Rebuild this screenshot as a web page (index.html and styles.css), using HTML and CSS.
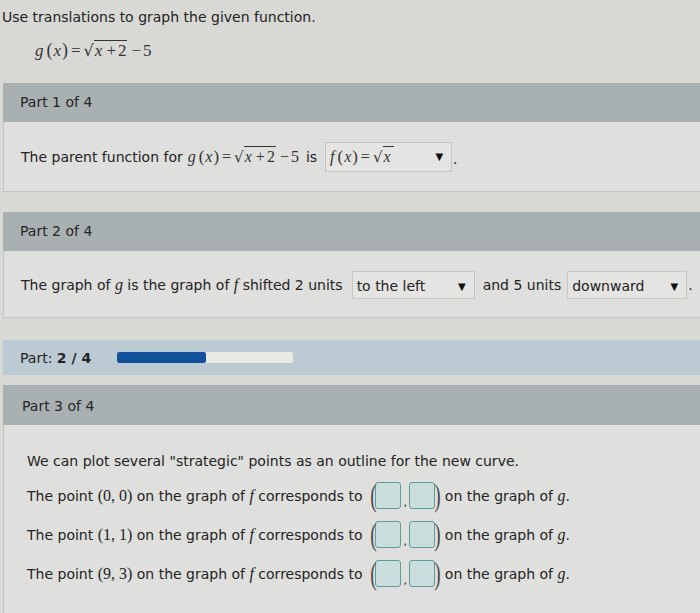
FILE: index.html
```html
<!DOCTYPE html>
<html>
<head>
<meta charset="utf-8">
<link rel="stylesheet" href="styles.css">
</head>
<body>
<div class="page">
  <div class="intro">
    <div class="title">Use translations to graph the given function.</div>
    <div class="formula math"><i>g</i><span class="par">(</span><i>x</i><span class="par">)</span><span class="op">=</span><span class="sq">√</span><span class="radicand"><i>x</i><span class="op">+</span>2</span><span class="op">−</span>5</div>
  </div>

  <section class="part">
    <div class="part-head">Part 1 of 4</div>
    <div class="part-body body1">
      <span>The parent function for</span>
      <span class="math inline-math"><i>g</i><span class="par">(</span><i>x</i><span class="par">)</span><span class="op">=</span><span class="sq">√</span><span class="radicand"><i>x</i><span class="op">+</span>2</span><span class="op">−</span>5</span>
      <span>is</span>
      <span class="select sel1"><span class="math"><i>f</i><span class="par">(</span><i>x</i><span class="par">)</span><span class="op">=</span><span class="sq">√</span><span class="radicand"><i>x</i></span></span><span class="arrow">▼</span></span><span class="dot">.</span>
    </div>
  </section>

  <section class="part part2">
    <div class="part-head">Part 2 of 4</div>
    <div class="part-body body2">
      <span>The graph of <i class="mv">g</i> is the graph of <i class="mv">f</i> shifted 2 units</span>
      <span class="select sel2"><span>to the left</span><span class="arrow">▼</span></span>
      <span class="and">and 5 units</span>
      <span class="select sel3"><span>downward</span><span class="arrow">▼</span></span><span class="dot">.</span>
    </div>
  </section>

  <div class="progress">
    <span>Part: <b>2 / 4</b></span>
    <span class="bar"><span class="fill"></span></span>
  </div>

  <section class="part part3">
    <div class="part-head">Part 3 of 4</div>
    <div class="part-body body3">
      <p class="lead">We can plot several "strategic" points as an outline for the new curve.</p>
      <div class="row">
        <span>The point <span class="pt">(0, 0)</span> on the graph of <i class="mv">f</i> corresponds to</span>
        <span class="pair"><span class="paren">(</span><span class="box"></span><span class="comma">,</span><span class="box"></span><span class="paren">)</span></span>
        <span>on the graph of <i class="mv">g</i>.</span>
      </div>
      <div class="row">
        <span>The point <span class="pt">(1, 1)</span> on the graph of <i class="mv">f</i> corresponds to</span>
        <span class="pair"><span class="paren">(</span><span class="box"></span><span class="comma">,</span><span class="box"></span><span class="paren">)</span></span>
        <span>on the graph of <i class="mv">g</i>.</span>
      </div>
      <div class="row">
        <span>The point <span class="pt">(9, 3)</span> on the graph of <i class="mv">f</i> corresponds to</span>
        <span class="pair"><span class="paren">(</span><span class="box"></span><span class="comma">,</span><span class="box"></span><span class="paren">)</span></span>
        <span>on the graph of <i class="mv">g</i>.</span>
      </div>
    </div>
  </section>
</div>
</body>
</html>
```

FILE: styles.css
```css
html, body {
  margin: 0;
  padding: 0;
  background: #d8d8d5;
  overflow: hidden;
}
body {
  font-family: "DejaVu Sans", Verdana, sans-serif;
  font-size: 14px;
  color: #232323;
  width: 700px;
  height: 613px;
}
.page {
  width: 700px;
}
.intro {
  height: 83px;
  box-sizing: border-box;
  padding: 9px 0 0 2px;
}
.title {
  line-height: 17px;
}
.math {
  font-family: "Liberation Serif", "Times New Roman", serif;
}
.math i, .mv {
  font-family: "Liberation Serif", "Times New Roman", serif;
  font-style: italic;
}
.formula {
  margin: 14px 0 0 33px;
  font-size: 17px;
  color: #333;
  display: flex;
  align-items: baseline;
}
.par {
  font-size: 1.05em;
  padding: 0 1px;
}
.math i:first-child {
  margin-right: 2px;
}
.op {
  padding: 0 2px;
}
.sq {
  font-family: "DejaVu Sans", sans-serif;
  font-size: 0.95em;
  margin-left: 1px;
}
.radicand {
  border-top: 1px solid #333;
  padding: 1px 1px 0 1px;
  margin-right: 2px;
  line-height: 1.1;
}
.part {
  margin-left: 3px;
}
.part-head {
  height: 39px;
  background: #a9b0b1;
  padding-left: 17px;
  line-height: 39px;
  color: #262626;
}
.part-body {
  background: #dfdfdd;
  border: 1px solid #c2c2c0;
  border-top: none;
  box-sizing: border-box;
  display: flex;
  align-items: center;
  padding-left: 17px;
  gap: 5px;
  width: 720px;
}
.body1 {
  height: 70px;
  margin-bottom: 20px;
}
.inline-math {
  font-size: 16px;
  display: inline-flex;
  align-items: baseline;
  color: #333;
  margin-right: 2px;
}
.select {
  display: inline-flex;
  align-items: center;
  justify-content: space-between;
  box-sizing: border-box;
  border: 1px solid #c6c6c4;
  background: #e4e4e2;
  padding: 0 8px 0 4px;
}
.select .math {
  font-size: 16px;
  display: inline-flex;
  align-items: baseline;
  color: #333;
}
.sel1 {
  width: 127px;
  height: 30px;
  margin-left: 3px;
}
.arrow {
  font-size: 10px;
  color: #111;
}
.dot {
  margin-left: -4px;
  align-self: flex-end;
  margin-bottom: 24px;
}
.body2 {
  height: 67px;
  margin-bottom: 22px;
  padding-top: 2px;
}
.body2 .mv {
  font-size: 16px;
}
.sel2 {
  width: 123px;
  height: 28px;
  padding-top: 2px;
  margin-left: 4px;
}
.sel3 {
  width: 120px;
  height: 28px;
  padding-top: 2px;
}
.and {
  margin: 0 1px 0 3px;
}
.progress {
  margin-left: 3px;
  height: 35px;
  background: #bccad3;
  display: flex;
  align-items: center;
  padding-left: 17px;
  gap: 26px;
  margin-bottom: 10px;
}
.progress b {
  font-weight: bold;
}
.bar {
  width: 176px;
  height: 11px;
  background: #ebe9e4;
  border-radius: 2px;
  display: flex;
}
.fill {
  width: 89px;
  height: 100%;
  background: #12509c;
  border-radius: 2px;
}
.part3 .part-head {
  height: 40px;
  line-height: 42px;
  padding-left: 19px;
}
.body3 {
  display: block;
  height: 200px;
  padding: 28px 0 0 23px;
}
.lead {
  margin: 0 0 12px 0;
  line-height: 17px;
}
.row {
  display: flex;
  align-items: center;
  gap: 5px;
  height: 27px;
  margin-bottom: 12px;
}
.pt {
  font-family: "Liberation Serif", "Times New Roman", serif;
  font-size: 16px;
}
.row .mv {
  font-size: 16px;
}
.pair {
  display: inline-flex;
  align-items: center;
  margin-left: 3px;
}
.paren {
  font-family: "Liberation Serif", serif;
  font-size: 32px;
  line-height: 27px;
  color: #4a4a4a;
  transform: scaleX(0.6);
  margin: 0 -3px;
}
.box {
  width: 24px;
  height: 25px;
  border: 1.5px solid #5a9e9c;
  background: #c9dedd;
  border-radius: 3px;
}
.comma {
  width: 8px;
  text-align: center;
  align-self: flex-end;
  font-size: 11px;
  line-height: 12px;
}
```
